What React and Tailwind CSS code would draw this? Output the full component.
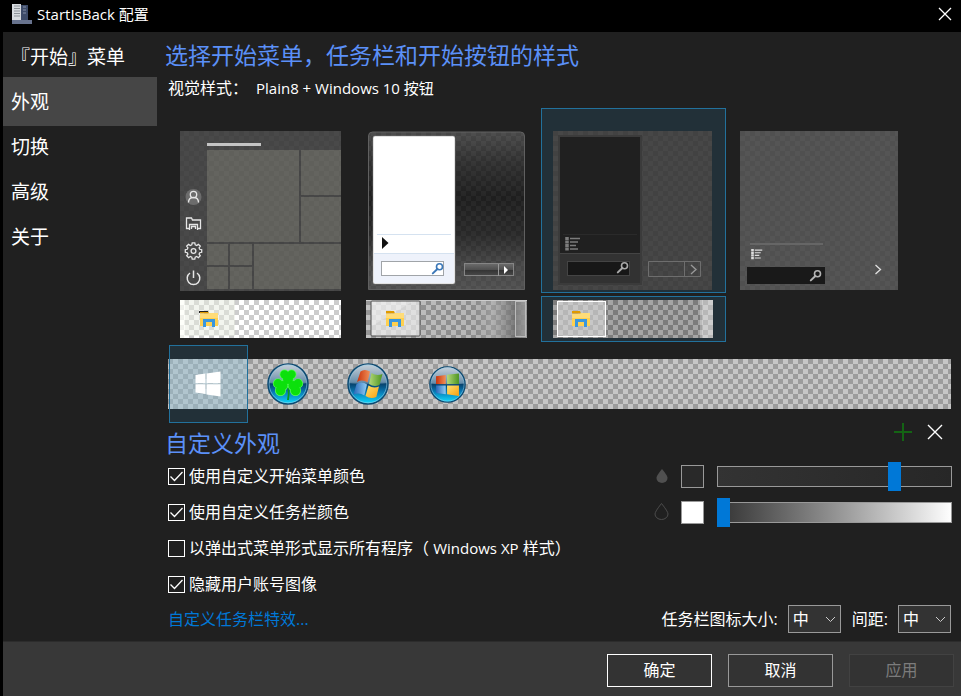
import { useState } from 'react';

const NAV_ITEMS = ['『开始』菜单', '外观', '切换', '高级', '关于'];

function Checker({ id, dark, light, size = 5 }) {
  return (
    <pattern id={id} width={size * 2} height={size * 2} patternUnits="userSpaceOnUse">
      <rect width={size * 2} height={size * 2} fill={light} />
      <rect width={size} height={size} fill={dark} />
      <rect x={size} y={size} width={size} height={size} fill={dark} />
    </pattern>
  );
}

function ListGlyph({ x, y, color }) {
  return (
    <g transform={`translate(${x} ${y})`} stroke={color} fill="none">
      <path d="M2 0v14" strokeWidth="3.5" strokeDasharray="3 0.5" />
      <path d="M5 1.5h10M5 5h8M5 8.5h6M5 12h8" strokeWidth="1.4" />
    </g>
  );
}

function SearchGlyph({ x, y, color }) {
  return (
    <g transform={`translate(${x} ${y})`} stroke={color} fill="none">
      <circle cx="7.5" cy="3.8" r="3" strokeWidth="1.6" />
      <path d="M5.4 6L0.8 10.4" strokeWidth="2" strokeLinecap="round" />
    </g>
  );
}

function Folder({ x, y }) {
  return (
    <g transform={`translate(${x} ${y})`}>
      <path d="M0 0h8l1 2.5H0z" fill="#e09a00" />
      <path d="M0 3h8l1.5-1H18v13H0z" fill="#ffd04f" />
      <path d="M0 3h8l1.5-1H18v5H0z" fill="#ffdc78" />
      <path d="M3 16V8h12v8h-3v-5H6v5z" fill="#3a96dd" />
    </g>
  );
}

function Win10Menu() {
  return (
    <svg width="162" height="160" aria-hidden="true">
      <defs>
        <Checker id="m1" dark="#454545" light="#494949" />
        <Checker id="m1t" dark="#60605b" light="#64645f" />
      </defs>
      <rect x="1" width="161" height="160" fill="url(#m1)" />
      <rect x="28" y="12" width="54" height="3" fill="#c4c4c4" />
      <g fill="url(#m1t)">
        <rect x="28" y="19" width="92" height="92" />
        <rect x="122" y="19" width="40" height="45" />
        <rect x="122" y="66" width="40" height="45" />
        <rect x="28" y="113" width="21" height="21" />
        <rect x="51" y="113" width="22" height="21" />
        <rect x="28" y="136" width="21" height="22" />
        <rect x="51" y="136" width="22" height="22" />
        <rect x="75" y="113" width="87" height="45" />
      </g>
      <circle cx="14.5" cy="66" r="8" fill="#6c6c6c" />
      <g fill="none" stroke="#e6e6e6" strokeWidth="1.3" transform="translate(-0.5 0)">
        <circle cx="15" cy="63.5" r="3.2" />
        <path d="M10 71.5c0-3 2-5 5-5s5 2 5 5" />
        <path d="M11 97.500H8V87h5l1 2h8v8.500h-3M11 99v-5.500h8V99M13 98v-2.500h4V98" />
        <circle cx="15" cy="120" r="2.4" />
        <path d="M13.7 113.1h2.6l.4 2 1.5.6 1.7-1.1 1.9 1.8-1.2 1.7.6 1.4 2 .4v2.6l-2 .4-.6 1.5 1.2 1.6-1.9 1.9-1.7-1.2-1.5.7-.4 2h-2.6l-.4-2-1.5-.7-1.7 1.2-1.9-1.9 1.2-1.6-.6-1.5-2-.4v-2.6l2-.4.6-1.4-1.2-1.7 1.9-1.8 1.7 1.1 1.5-.6z" transform="translate(0 -1.2)" />
        <path d="M15 139.500v7.500M11.500 142a6.300 6.300 0 1 0 7 0" strokeWidth="1.500" />
      </g>
    </svg>
  );
}

function AeroMenu() {
  return (
    <svg width="162" height="160" aria-hidden="true">
      <defs>
        <Checker id="m2" dark="#000000" light="#ffffff" />
        <linearGradient id="m2g" x2="0" y2="1">
          <stop offset="0" stopColor="#4a4a4a" />
          <stop offset="0.2" stopColor="#303030" />
          <stop offset="0.42" stopColor="#1f1f1f" />
          <stop offset="0.65" stopColor="#2a2a2a" />
          <stop offset="0.85" stopColor="#484848" />
          <stop offset="1" stopColor="#505050" />
        </linearGradient>
        <linearGradient id="m2b" x2="0" y2="1">
          <stop offset="0" stopColor="#6c6c6c" />
          <stop offset="0.5" stopColor="#505050" />
          <stop offset="0.55" stopColor="#343434" />
          <stop offset="1" stopColor="#484848" />
        </linearGradient>
      </defs>
      <path d="M2.5 158.5V5q0-4 4-4h148q4 0 4 4v153.5z" fill="url(#m2g)" />
      <path d="M2.5 158.5V5q0-4 4-4h148q4 0 4 4v153.5z" fill="url(#m2)" opacity="0.03" />
      <path d="M2.5 158.5V5q0-4 4-4h148q4 0 4 4v153.5z" fill="none" stroke="#606060" />
      <rect x="7" y="5" width="82" height="148" rx="2" fill="#fff" stroke="#888" strokeWidth="0.5" />
      <path d="M8 122h80v30H8z" fill="#eef2fb" />
      <path d="M11 103.5h74M8 122.5h80" stroke="#d5e2f0" />
      <path d="M16 106l6.5 6-6.5 6z" fill="#111" />
      <rect x="15.5" y="130.5" width="62" height="14" fill="#fff" stroke="#a0a4a8" />
      <SearchGlyph x="66" y="132" color="#3c78b8" />
      <rect x="98.5" y="132.5" width="49" height="12" fill="url(#m2b)" stroke="#858585" />
      <path d="M132.5 133v12" stroke="#999" />
      <path d="M138 135l4 4-4 4z" fill="#fff" />
    </svg>
  );
}

function Plain8Menu() {
  return (
    <svg width="162" height="160" aria-hidden="true">
      <defs><Checker id="m3" dark="#424242" light="#474747" /></defs>
      <rect width="159" height="159" fill="url(#m3)" />
      <rect x="6" y="5" width="82" height="148" fill="#323232" stroke="#3b3b3b" strokeWidth="2" />
      <rect x="7" y="6" width="80" height="116" fill="#202020" />
      <path d="M10 103.5h74" stroke="#2a2a2a" />
      <path d="M7 122.5h80" stroke="#444" />
      <ListGlyph x="12" y="106" color="#7c7c7c" />
      <rect x="14.5" y="130.5" width="62" height="14" fill="#171717" stroke="#444" />
      <SearchGlyph x="64" y="131" color="#aaa" />
      <path d="M95.5 130.5h52v15h-52zM131.5 130.5v15" fill="none" stroke="#6e6e6e" />
      <path d="M138 134l5 4.5-5 4.5" fill="none" stroke="#999" strokeWidth="1.3" />
    </svg>
  );
}

function Plain10Menu() {
  return (
    <svg width="162" height="160" aria-hidden="true">
      <defs><Checker id="m4" dark="#505050" light="#555555" /></defs>
      <rect width="158" height="159" fill="url(#m4)" />
      <rect x="10" y="112" width="73" height="2" fill="#666" />
      <g transform="translate(11 118) scale(0.75)">
        <ListGlyph x="0" y="0" color="#ddd" />
      </g>
      <rect x="7" y="136" width="78" height="17" fill="#191919" />
      <SearchGlyph x="70" y="139" color="#b4b4b4" />
      <path d="M135.5 134l5 4.5-5 4.5" fill="none" stroke="#e0e0e0" strokeWidth="1.3" />
    </svg>
  );
}

function Win10Taskbar() {
  return (
    <svg width="162" height="38" aria-hidden="true">
      <defs><Checker id="t1" dark="#ffffff" light="#cccccc" /></defs>
      <rect x="1" width="161" height="38" fill="url(#t1)" />
      <rect x="6" width="50" height="36" fill="#e8ece0" opacity="0.5" />
      <rect x="1" width="5" height="38" fill="#fdfff8" opacity="0.7" />
      <Folder x="21" y="11" />
      <path d="M20 11h9v1h-8v1h-1z" fill="#222" />
    </svg>
  );
}

function AeroTaskbar() {
  return (
    <svg width="162" height="38" aria-hidden="true">
      <defs>
        <Checker id="t2" dark="#8c8c8c" light="#bcbcbc" />
        <linearGradient id="t2g">
          <stop offset="0" stopColor="#fff" stopOpacity="0.1" />
          <stop offset="0.65" stopColor="#888" stopOpacity="0.1" />
          <stop offset="0.78" stopColor="#aaa" stopOpacity="0.5" />
          <stop offset="0.93" stopColor="#666" stopOpacity="0.8" />
          <stop offset="1" stopColor="#999" stopOpacity="0.8" />
        </linearGradient>
      </defs>
      <rect width="161" height="38" fill="url(#t2)" />
      <rect width="161" height="38" fill="url(#t2g)" />
      <path d="M0 .5h161" stroke="#ccc" />
      <rect x="5" y="1" width="49" height="35" rx="1" fill="#eee" fillOpacity="0.7" stroke="#555" />
      <path d="M6 26L46 2H6z" fill="#fff" opacity="0.25" />
      <rect x="149.5" y="1.5" width="10" height="35" fill="#999" fillOpacity="0.4" stroke="#bbb" />
      <Folder x="20" y="11" />
    </svg>
  );
}

function Plain8Taskbar() {
  return (
    <svg width="162" height="38" aria-hidden="true">
      <defs><Checker id="t3" dark="#7c7c7c" light="#a5a5a5" /></defs>
      <rect width="160" height="38" fill="url(#t3)" />
      <rect x="4.5" y="1.5" width="48" height="35" fill="#ddd" fillOpacity="0.6" stroke="#fff" />
      <rect x="147" width="2" height="38" fill="#ddd" opacity="0.4" />
      <rect x="149" width="11" height="38" fill="#fff" opacity="0.45" />
      <Folder x="19" y="11" />
    </svg>
  );
}

const STYLES = [
  { name: 'Windows 10', Menu: Win10Menu, Taskbar: Win10Taskbar },
  { name: 'Windows 7', Menu: AeroMenu, Taskbar: AeroTaskbar },
  { name: 'Plain8', Menu: Plain8Menu, Taskbar: Plain8Taskbar },
  { name: 'Plain10', Menu: Plain10Menu, Taskbar: null },
];

function Orb({ id, size, children }) {
  return (
    <svg width={size} height={size} viewBox="0 0 42 42" aria-hidden="true">
      <defs>
        <linearGradient id={`${id}-base`} x2="0" y2="1">
          <stop offset="0" stopColor="#5b7690" />
          <stop offset="0.45" stopColor="#356a90" />
          <stop offset="0.5" stopColor="#07436e" />
          <stop offset="0.7" stopColor="#0879b4" />
          <stop offset="1" stopColor="#10dcff" />
        </linearGradient>
        <linearGradient id={`${id}-gloss`} x2="0" y2="1">
          <stop offset="0" stopColor="#fff" stopOpacity="0.65" />
          <stop offset="1" stopColor="#fff" stopOpacity="0.2" />
        </linearGradient>
      </defs>
      <circle cx="21" cy="21" r="20" fill={`url(#${id}-base)`} stroke="#0c4a72" strokeWidth="1.5" />
      <path d="M2.5 20a18.5 18.5 0 0 1 37 0q-7 1-18.500 1t-18.500-1z" fill={`url(#${id}-gloss)`} />
      <circle cx="21" cy="21" r="18.8" fill="none" stroke="#9cd0ea" strokeWidth="0.7" opacity="0.8" />
      {children}
    </svg>
  );
}

function FlagColors({ id }) {
  return (
    <defs>
      <linearGradient id={`${id}-r`}><stop offset="0" stopColor="#c8320c" /><stop offset="1" stopColor="#f09058" /></linearGradient>
      <linearGradient id={`${id}-g`}><stop offset="0" stopColor="#b4d878" /><stop offset="1" stopColor="#4c9420" /></linearGradient>
      <linearGradient id={`${id}-b`}><stop offset="0" stopColor="#2868b8" /><stop offset="1" stopColor="#90ccf4" /></linearGradient>
      <linearGradient id={`${id}-y`} x2="1" y2="1"><stop offset="0" stopColor="#ffe070" /><stop offset="1" stopColor="#f8a010" /></linearGradient>
    </defs>
  );
}

function FlatLogo() {
  return (
    <svg width="26" height="26" viewBox="0 0 26 26" fill="#fff" aria-hidden="true">
      <path d="M.5 4L10.5 2.6v9.600H.5zM11.500 2.400L25.500.5v11.700h-14zM.5 13.300h10v9.600L.5 21.500zM11.500 13.300h14v12.200l-14-2z" />
    </svg>
  );
}

const CLOVER = [
  [17.5, 11.5, 4.2], [24.5, 11.5, 4.2], [21, 16, 5],
  [11, 20.5, 4.4], [13.5, 27.5, 4.8], [16, 22.5, 4.5],
  [31, 20.5, 4.4], [28.5, 27.5, 4.8], [26, 22.5, 4.5],
];

function CloverOrb() {
  return (
    <Orb id="clover" size={42}>
      <path d="M20.500 24q1 7-.5 13h2q1-6 0-13z" fill="#0a9a1c" />
      {CLOVER.map(([cx, cy, r]) => <circle key={`o${cx}-${cy}`} cx={cx} cy={cy} r={r + 0.7} fill="#58ff58" />)}
      {CLOVER.map(([cx, cy, r]) => <circle key={`f${cx}-${cy}`} cx={cx} cy={cy} r={r} fill="#0ce00c" />)}
    </Orb>
  );
}

function Win7Orb() {
  return (
    <Orb id="seven" size={42}>
      <FlagColors id="seven" />
      <path d="M13.500 8.500q4-3 9.500 0l-2.500 11q-5-3.500-10.500-.5z" fill="url(#seven-r)" />
      <path d="M24.500 10q5 3.500 11 1l-3 11q-5.500 2.500-10.500-1z" fill="url(#seven-g)" />
      <path d="M9.500 21q5.500-3 10.500.5l-2.700 11q-5-3.500-10.800-1z" fill="url(#seven-b)" />
      <path d="M21.500 22.500q5 3.500 10.500 1l-2.700 10.500q-5.500 2.500-10.800-1z" fill="url(#seven-y)" />
    </Orb>
  );
}

function Win8Orb() {
  return (
    <Orb id="eight" size={37}>
      <FlagColors id="eight" />
      <path d="M8 11.5l11-1.300v10.300H8z" fill="url(#eight-r)" />
      <path d="M20.500 10L34 8.500v12H20.500z" fill="url(#eight-g)" />
      <path d="M8 22h11v10L8 30.700z" fill="url(#eight-b)" />
      <path d="M20.500 22H34v12l-13.500-1.800z" fill="url(#eight-y)" />
    </Orb>
  );
}

const START_BUTTONS = [
  { name: 'Windows 10 按钮', Icon: FlatLogo },
  { name: '三叶草按钮', Icon: CloverOrb },
  { name: 'Windows 7 按钮', Icon: Win7Orb },
  { name: 'Windows 8 按钮', Icon: Win8Orb },
];

function CheckOption({ label, checked, onChange, children }) {
  return (
    <div className="flex h-9 items-center">
      <label className="flex items-center gap-1">
        <span className="relative flex">
          <input
            type="checkbox"
            checked={checked}
            onChange={(e) => onChange(e.target.checked)}
            className="peer size-[17px] appearance-none border border-white"
          />
          <svg className="pointer-events-none absolute inset-0 hidden peer-checked:block" width="17" height="17" fill="none" stroke="#fff" strokeWidth="1.3" aria-hidden="true">
            <path d="M2.5 8.5l4 4 8-8.500" />
          </svg>
        </span>
        <span>{label}</span>
      </label>
      {children}
    </div>
  );
}

function ColorControls({ drop, swatch, track, label, value, onChange }) {
  return (
    <div className="ml-auto flex items-center">
      {drop}
      <button type="button" aria-label={`${label}颜色`} className={`ml-3 size-[23px] border border-[#999] ${swatch}`} />
      <input
        type="range"
        aria-label={`${label}强度`}
        value={value}
        onChange={(e) => onChange(Number(e.target.value))}
        className={`ml-[13px] h-[29px] w-[235px] appearance-none bg-transparent [&::-webkit-slider-runnable-track]:h-[21px] [&::-webkit-slider-runnable-track]:shadow-[inset_0_0_0_1px_#999] [&::-webkit-slider-thumb]:-mt-1 [&::-webkit-slider-thumb]:h-[29px] [&::-webkit-slider-thumb]:w-[13px] [&::-webkit-slider-thumb]:appearance-none [&::-webkit-slider-thumb]:bg-[#0078d7] ${track}`}
      />
    </div>
  );
}

function SizeSelect({ id, label }) {
  return (
    <div className="flex items-center gap-[10px]">
      <label htmlFor={id}>{label}</label>
      <span className="relative flex">
        <select id={id} defaultValue="中" className="h-7 w-[53px] appearance-none border border-[#999] bg-[#333] pl-1">
          <option>小</option>
          <option>中</option>
          <option>大</option>
        </select>
        <svg className="pointer-events-none absolute top-[11px] right-[5px]" width="11" height="7" fill="none" stroke="#ccc" aria-hidden="true">
          <path d="M1 1l4.500 4.500L10 1" />
        </svg>
      </span>
    </div>
  );
}

function App() {
  const [page, setPage] = useState('外观');
  const [style, setStyle] = useState('Plain8');
  const [startButton, setStartButton] = useState('Windows 10 按钮');
  const [menuColor, setMenuColor] = useState(true);
  const [taskbarColor, setTaskbarColor] = useState(true);
  const [xpStyle, setXpStyle] = useState(false);
  const [hideAvatar, setHideAvatar] = useState(true);
  const [menuLevel, setMenuLevel] = useState(77);
  const [taskbarLevel, setTaskbarLevel] = useState(0);

  const xpLabel = <>以弹出式菜单形式显示所有程序（ <span className="text-[15px]">Windows XP</span> 样式）</>;

  return (
    <div className="flex min-h-screen flex-col bg-black pl-[3px] font-['Open_Sans','Noto_Sans_CJK_SC',sans-serif] text-base text-white">
      <header className="flex h-8 items-center px-[9px] pb-1">
        <svg width="20" height="20" aria-hidden="true">
          <path d="M0 0h9v16H0z" fill="#d8dce0" />
          <path d="M2 2h6M2 4.500h6M2 7h6M2 9.500h6M2 12h6" stroke="#8c9298" />
          <path d="M9 1h7v15H9z" fill="#3d4b68" />
          <path d="M11 3h3M11 6h3M11 9h3" stroke="#8590a8" />
          <path d="M0 16h20v4H0z" fill="#68738e" />
        </svg>
        <h1 className="ml-[5px] text-[15px] leading-6">StartIsBack 配置</h1>
        <button type="button" aria-label="关闭" className="ml-auto">
          <svg width="14" height="14" stroke="#fff" strokeWidth="1.3" aria-hidden="true">
            <path d="M1 1l12 12M13 1L1 13" />
          </svg>
        </button>
      </header>

      <div className="flex flex-1 bg-[#202020]">
        <nav className="flex w-[154px] shrink-0 flex-col pt-[2px] text-[19px]">
          {NAV_ITEMS.map((item) => (
            <button
              key={item}
              type="button"
              onClick={() => setPage(item)}
              className={`shrink-0 pt-0.5 pl-2 text-left ${page === item ? '-my-0.5 h-[49px] bg-[#464646]' : 'h-[45px]'}`}
            >
              {item}
            </button>
          ))}
        </nav>

        <main className="min-w-0 flex-1 pt-2 pr-[9px] pl-2">
          <h2 className="text-[23px] leading-[30px] text-[#5b90f8]">选择开始菜单，任务栏和开始按钮的样式</h2>
          <p className="mt-[6px] flex gap-2 pl-[3px] text-base leading-6">
            <span>视觉样式：</span>
            <span className="text-[15px]">Plain8 + Windows 10 按钮</span>
          </p>

          <div className="mt-2 flex gap-0.5 pl-0.5">
            {STYLES.map(({ name, Menu, Taskbar }) => {
              const box = style === name ? 'border-[#22719c] bg-[#223038]' : 'border-transparent';
              return (
                <button key={name} type="button" aria-label={name} onClick={() => setStyle(name)} className="flex w-[185px] flex-col gap-[3px]">
                  <span className={`flex h-[185px] w-full border pt-[22px] pl-[11px] ${box}`}>
                    <Menu />
                  </span>
                  {Taskbar && (
                    <span className={`flex h-[46px] w-full border pt-[3px] pl-[11px] ${box}`}>
                      <Taskbar />
                    </span>
                  )}
                </button>
              );
            })}
          </div>

          <div className="mt-[17px] mr-px ml-[3px] flex h-[50px] gap-px bg-[repeating-conic-gradient(#c6c6c6_0_25%,#9c9c9c_0_50%)] bg-[length:10px_10px] pl-px">
            {START_BUTTONS.map(({ name, Icon }) => (
              <button
                key={name}
                type="button"
                aria-label={name}
                onClick={() => setStartButton(name)}
                className={`-my-[14px] flex h-[78px] w-[79px] items-center justify-center border pr-[2px] ${startButton === name ? 'border-[#22719c] bg-[linear-gradient(#223038_13px,#9cc4d680_13px,#9cc4d680_63px,#223038_63px)]' : 'border-transparent'}`}
              >
                <Icon />
              </button>
            ))}
          </div>

          <div className="mt-[19px] flex justify-between">
            <h2 className="text-[23px] leading-[30px] text-[#5b90f8]">自定义外观</h2>
            <div className="flex items-start gap-[15px] pt-[-4px] pr-[9px]">
              <button type="button" aria-label="添加" className="-mt-[5px]">
                <svg width="18" height="18" stroke="#146414" strokeWidth="2" aria-hidden="true">
                  <path d="M9 0v18M0 9h18" />
                </svg>
              </button>
              <button type="button" aria-label="删除" className="-mt-1">
                <svg width="16" height="16" stroke="#fff" strokeWidth="1.4" aria-hidden="true">
                  <path d="M1 1l14 14M15 1L1 15" />
                </svg>
              </button>
            </div>
          </div>

          <div className="pl-[3px]">
            <CheckOption label="使用自定义开始菜单颜色" checked={menuColor} onChange={setMenuColor}>
              <ColorControls
                label="开始菜单"
                value={menuLevel}
                onChange={setMenuLevel}
                swatch="bg-[#292929]"
                track="[&::-webkit-slider-runnable-track]:bg-linear-to-r [&::-webkit-slider-runnable-track]:from-[#333] [&::-webkit-slider-runnable-track]:to-[#272727]"
                drop={
                  <svg width="15" height="18" fill="#505050" aria-hidden="true">
                    <path d="M8 2Q13.500 8.500 13.500 11a5.500 5 0 0 1-11 0Q2.500 8.500 8 2z" />
                  </svg>
                }
              />
            </CheckOption>
            <CheckOption label="使用自定义任务栏颜色" checked={taskbarColor} onChange={setTaskbarColor}>
              <ColorControls
                label="任务栏"
                value={taskbarLevel}
                onChange={setTaskbarLevel}
                swatch="bg-white"
                track="[&::-webkit-slider-runnable-track]:bg-linear-to-r [&::-webkit-slider-runnable-track]:from-[#333] [&::-webkit-slider-runnable-track]:to-white"
                drop={
                  <svg width="15" height="18" fill="none" stroke="#4c4c4c" aria-hidden="true">
                    <path d="M7.500 .5Q14 8.500 14 11a6.500 5.500 0 0 1-13 0Q1 8.500 7.500 .5z" />
                  </svg>
                }
              />
            </CheckOption>
            <CheckOption label={xpLabel} checked={xpStyle} onChange={setXpStyle} />
            <CheckOption label="隐藏用户账号图像" checked={hideAvatar} onChange={setHideAvatar} />

            <div className="flex h-9 items-center justify-between pr-px pb-0.5">
              <a href="#effects" className="text-[#0078d7]">自定义任务栏特效...</a>
              <div className="flex gap-[11px]">
                <SizeSelect id="icon-size" label="任务栏图标大小:" />
                <SizeSelect id="icon-gap" label="间距:" />
              </div>
            </div>
          </div>
        </main>
      </div>

      <footer className="flex h-[55px] items-center justify-end gap-4 border-t border-[#2c2c2c] bg-[#383838] pt-0.5 pr-[7px]">
        <button type="button" className="h-[33px] w-[105px] border border-white bg-[#333]">确定</button>
        <button type="button" className="h-[33px] w-[105px] border border-[#999] bg-[#333]">取消</button>
        <button type="button" disabled className="h-[33px] w-[105px] border border-[#424242] bg-[#333] text-[#7c7c7c]">应用</button>
      </footer>
    </div>
  );
}

export default App;
